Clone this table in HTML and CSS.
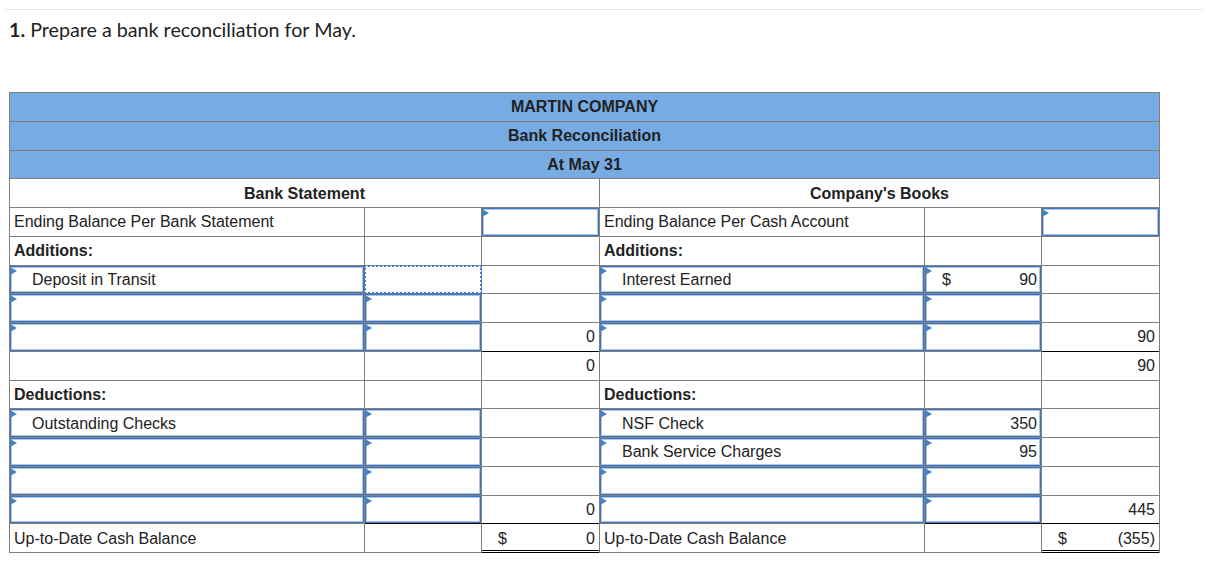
FILE: index.html
```html
<!DOCTYPE html>
<html>
<head>
<meta charset="utf-8">
<link rel="stylesheet" href="styles.css">
</head>
<body>
<div class="page">
  <div class="rule"></div>
  <p class="question"><b>1.</b> Prepare a bank reconciliation for May.</p>
  <div class="sheet">
    <div class="c head span6">MARTIN COMPANY</div>
    <div class="c head span6">Bank Reconciliation</div>
    <div class="c head span6">At May 31</div>
    <div class="c sub span3">Bank Statement</div>
    <div class="c sub span3">Company's Books</div>

    <div class="c">Ending Balance Per Bank Statement</div>
    <div class="c"></div>
    <div class="c inp"></div>
    <div class="c">Ending Balance Per Cash Account</div>
    <div class="c"></div>
    <div class="c inp"></div>

    <div class="c bold">Additions:</div>
    <div class="c"></div>
    <div class="c"></div>
    <div class="c bold">Additions:</div>
    <div class="c"></div>
    <div class="c"></div>

    <div class="c inp ind">Deposit in Transit</div>
    <div class="c focus"></div>
    <div class="c"></div>
    <div class="c inp ind">Interest Earned</div>
    <div class="c inp money"><span>$</span><span>90</span></div>
    <div class="c"></div>

    <div class="c inp"></div>
    <div class="c inp"></div>
    <div class="c"></div>
    <div class="c inp"></div>
    <div class="c inp"></div>
    <div class="c"></div>

    <div class="c inp"></div>
    <div class="c inp"></div>
    <div class="c num">0</div>
    <div class="c inp"></div>
    <div class="c inp"></div>
    <div class="c num">90</div>

    <div class="c"></div>
    <div class="c"></div>
    <div class="c num top">0</div>
    <div class="c"></div>
    <div class="c"></div>
    <div class="c num top">90</div>

    <div class="c bold">Deductions:</div>
    <div class="c"></div>
    <div class="c"></div>
    <div class="c bold">Deductions:</div>
    <div class="c"></div>
    <div class="c"></div>

    <div class="c inp ind">Outstanding Checks</div>
    <div class="c inp"></div>
    <div class="c"></div>
    <div class="c inp ind">NSF Check</div>
    <div class="c inp num">350</div>
    <div class="c"></div>

    <div class="c inp"></div>
    <div class="c inp"></div>
    <div class="c"></div>
    <div class="c inp ind">Bank Service Charges</div>
    <div class="c inp num">95</div>
    <div class="c"></div>

    <div class="c inp"></div>
    <div class="c inp"></div>
    <div class="c"></div>
    <div class="c inp"></div>
    <div class="c inp"></div>
    <div class="c"></div>

    <div class="c inp"></div>
    <div class="c inp"></div>
    <div class="c num">0</div>
    <div class="c inp"></div>
    <div class="c inp"></div>
    <div class="c num">445</div>

    <div class="c">Up-to-Date Cash Balance</div>
    <div class="c top"></div>
    <div class="c money top dbl"><span>$</span><span>0</span></div>
    <div class="c">Up-to-Date Cash Balance</div>
    <div class="c top"></div>
    <div class="c money top dbl"><span>$</span><span>(355)</span></div>
  </div>
</div>
</body>
</html>
```

FILE: styles.css
```css
html, body {
  margin: 0;
  padding: 0;
  background: #fff;
}

.page {
  padding: 9px 4px 0 5px;
}

.rule {
  height: 1px;
  background: #e6e6e6;
}

.question {
  margin: 8px 0 0 4px;
  font-family: Lato, "Open Sans", sans-serif;
  font-size: 19.7px;
  line-height: 23px;
  color: #222;
}

.question b {
  font-weight: 700;
}

.sheet {
  margin: 51px 0 0 4px;
  width: 1149px;
  display: grid;
  grid-template-columns: 354px 116px 117px 324px 116px 117px;
  grid-auto-rows: 27.75px;
  gap: 1px;
  background: #7f7f7f;
  border: 1px solid #7f7f7f;
  font-family: "Liberation Sans", Arial, sans-serif;
  font-size: 16px;
  color: #222;
}

.c {
  background: #fff;
  display: flex;
  align-items: center;
  padding: 1px 4px 0;
  white-space: nowrap;
  position: relative;
  box-sizing: border-box;
}

.span6 {
  grid-column: span 6;
}

.span3 {
  grid-column: span 3;
}

.head {
  background: #76abe3;
  justify-content: center;
  font-weight: 700;
}

.sub {
  justify-content: center;
  font-weight: 700;
}

.bold {
  font-weight: 700;
}

.num {
  justify-content: flex-end;
}

.money {
  justify-content: space-between;
  padding-left: 16px;
}

.inp {
  border: 1px solid #4277bb;
  box-shadow: inset 0 0 0 1px #a9c6ea;
  padding-right: 3px;
  padding-top: 1px;
}

.inp::before {
  content: "";
  position: absolute;
  top: 0;
  left: -1px;
  width: 0;
  height: 0;
  border-left: 7px solid #4a7fc1;
  border-top: 4px solid transparent;
  border-bottom: 4px solid transparent;
}

.ind {
  padding-left: 21px;
}

.focus {
  outline: 2px dotted #3c7ad0;
  outline-offset: -1px;
}

.top {
  box-shadow: 0 -1px 0 0 #000;
}

.dbl {
  box-shadow: 0 -1px 0 0 #000, 0 1px 0 0 #000, inset 0 -1px 0 0 #fff, inset 0 -2px 0 0 #000;
}
```
